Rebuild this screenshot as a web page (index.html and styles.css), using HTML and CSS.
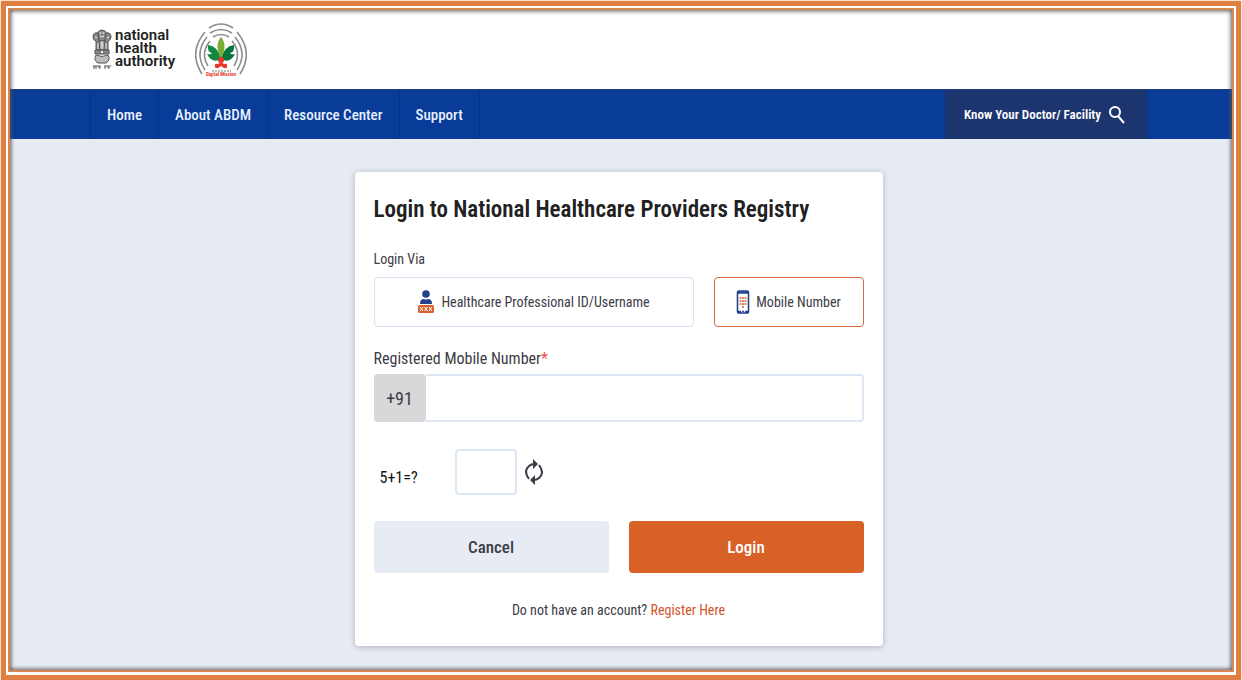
FILE: index.html
```
<!DOCTYPE html>
<html lang="en">
<head>
    <meta charset="UTF-8">
    <meta name="viewport" content="width=device-width, initial-scale=1.0">
    <title>Login to National Healthcare Providers Registry</title>
    <link rel="stylesheet" href="styles.css">
</head>
<body>
    <div class="frame">
        <div class="page">
            <header class="header">
                <a href="#" class="nha-logo">
                    <svg class="emblem" width="20" height="42" viewBox="0 0 20 42" aria-hidden="true">
                        <g fill="#888" stroke="#555" stroke-width="1">
                            <path d="M6 3 Q10 -1 14 3 L15 7 L13 12 H7 L5 7 Z"/>
                            <path d="M6 4 Q1 3 1 8 Q1 11 4 12 L4 21 H8 L7 11 Z"/>
                            <path d="M14 4 Q19 3 19 8 Q19 11 16 12 L16 21 H12 L13 11 Z"/>
                            <path d="M7 12 H13 L12 21 H8 Z" fill="#aaa"/>
                            <path d="M3 21 H17 V25 H3 Z"/>
                            <path d="M4 26 Q10 29 16 26 Q19 31 14 34 H6 Q1 31 4 26 Z" fill="#bbb"/>
                        </g>
                        <path d="M8 3 L9 5 M12 3 L11 5 M8 7 Q10 9 12 7 M3 8 L5 9 M17 8 L15 9 M6 14 V20 M14 14 V20 M10 12 V20" stroke="#eee" fill="none"/>
                        <circle cx="10" cy="23" r="2" fill="#eee" stroke="#555"/>
                        <path d="M1 37 H9 M12 37 H19 M2 37 V40 M4 37 V40 M6 38 H8 V40 M13 37 V40 M15 38 H17 V40" stroke="#555" fill="none"/>
                    </svg>
                    <span class="nha-name">national<br>health<br>authority</span>
                </a>
                <a href="#" class="mission-logo" aria-label="Digital Mission">
                    <svg width="52" height="54" viewBox="0 0 52 54">
                        <g fill="none" stroke="#8d8d8d" stroke-width="1.6">
                            <path d="M14 5 Q26 -3 38 5"/>
                            <path d="M15 10 Q26 3 37 10"/>
                            <path d="M18 14 Q26 9 34 14"/>
                            <path d="M10 9 Q-7 29 7 51"/>
                            <path d="M12 14 Q-1 30 10 47"/>
                            <path d="M15 18 Q5 30 13 43"/>
                            <path d="M42 9 Q59 29 45 51"/>
                            <path d="M40 14 Q53 30 42 47"/>
                            <path d="M37 18 Q47 30 39 43"/>
                        </g>
                        <path d="M26 36 Q17 41 12 31 Q16 32 17 30 Q12 29 13 22 Q23 23 26 36 Z" fill="#138845"/>
                        <path d="M26 36 Q35 41 40 31 Q36 32 35 30 Q40 29 39 22 Q29 23 26 36 Z" fill="#08743b"/>
                        <path d="M26 14 Q19 22 26 36 Q33 22 26 14 Z" fill="#7cac32"/>
                        <circle cx="26" cy="37" r="3" fill="#e6392c"/>
                        <path d="M26 39 L29 41 Q33 40 32 44 Q31 47 26 43 Q21 47 20 44 Q19 40 23 41 Z" fill="#e6392c"/>
                        <path d="M17 48 H36" stroke="#777" stroke-dasharray="2 1"/>
                        <text class="mission-text" x="26" y="53" text-anchor="middle">Digital Mission</text>
                    </svg>
                </a>
            </header>

            <nav class="navbar">
                <div class="menu">
                    <a href="#">Home</a>
                    <a href="#">About ABDM</a>
                    <a href="#">Resource Center</a>
                    <a href="#">Support</a>
                </div>
                <a href="#" class="know-doctor">
                    Know Your Doctor/ Facility
                    <svg width="16" height="18" viewBox="0 0 16 18" fill="none" stroke="#fff" stroke-width="2" aria-hidden="true">
                        <circle cx="6" cy="6" r="5"/>
                        <path d="M9 10 L15 17"/>
                    </svg>
                </a>
            </nav>

            <main class="content">
                <form class="card">
                    <h1>Login to National Healthcare Providers Registry</h1>

                    <div class="via-label" id="via">Login Via</div>
                    <div class="options" role="group" aria-labelledby="via">
                        <button type="button" class="option option-id" aria-pressed="false">
                            <svg width="18" height="24" viewBox="0 0 18 24" aria-hidden="true">
                                <circle cx="9" cy="4" r="3.8" fill="#24418c"/>
                                <path d="M3 14 Q3 9 7 9 Q9 10 11 9 Q15 9 15 14 Z" fill="#24418c"/>
                                <rect x="1" y="15" width="16" height="8" rx="1.5" fill="#d8622b"/>
                                <path d="M3 17 L6 21 M6 17 L3 21 M7.5 17 L10.5 21 M10.5 17 L7.5 21 M12 17 L15 21 M15 17 L12 21" stroke="#fff"/>
                            </svg>
                            Healthcare Professional ID/Username
                        </button>
                        <button type="button" class="option active" aria-pressed="true">
                            <svg width="14" height="24" viewBox="0 0 14 24" aria-hidden="true">
                                <rect x="1.5" y="1" width="11" height="22" rx="1.5" fill="#fff" stroke="#24418c" stroke-width="1.6"/>
                                <path d="M1 2.5 H13 M1 22 H5 M9 22 H13" stroke="#24418c" stroke-width="2.4"/>
                                <circle cx="7" cy="21.5" r="1" fill="#24418c"/>
                                <g fill="#e08a60">
                                    <path d="M3.5 7 h2 v2 h-2 Z M6 7 h2 v2 h-2 Z M8.5 7 h2 v2 h-2 Z"/>
                                    <path d="M3.5 10 h2 v2 h-2 Z M6 10 h2 v2 h-2 Z M8.5 10 h2 v2 h-2 Z"/>
                                    <path d="M3.5 13 h2 v2 h-2 Z M6 13 h2 v2 h-2 Z M8.5 13 h2 v2 h-2 Z"/>
                                    <path d="M6 16 h2 v2 h-2 Z"/>
                                </g>
                            </svg>
                            Mobile Number
                        </button>
                    </div>

                    <label class="field-label" for="mobile">Registered Mobile Number<span class="required">*</span></label>
                    <div class="phone">
                        <span class="prefix">+91</span>
                        <input type="tel" id="mobile">
                    </div>

                    <div class="captcha">
                        <label class="captcha-text" for="answer">5+1=?</label>
                        <input type="text" id="answer">
                        <button type="button" class="refresh" aria-label="Refresh captcha">
                            <svg width="18" height="26" viewBox="0 0 18 26" fill="none" stroke="#3c3c46" stroke-width="2">
                                <path d="M4 20 Q-2 12 4 7 Q6 5 10 5"/>
                                <path d="M14 6 Q20 14 14 19 Q12 21 8 21"/>
                                <path d="M8 0 L13 5 L8 10 Z M10 16 L5 21 L10 26 Z" fill="#3c3c46" stroke="none"/>
                            </svg>
                        </button>
                    </div>

                    <div class="actions">
                        <button type="button" class="btn cancel">Cancel</button>
                        <button type="submit" class="btn login">Login</button>
                    </div>

                    <p class="register">Do not have an account? <a href="#">Register Here</a></p>
                </form>
            </main>
        </div>
    </div>
</body>
</html>
```
FILE: styles.css
```
* {
    box-sizing: border-box;
}
body {
    margin: 0;
    font-family: "Roboto Condensed", Roboto, sans-serif;
    color: #3c3c46;
    background: #fff;
}
a {
    text-decoration: none;
}
button, input {
    font-family: inherit;
    color: inherit;
}
button {
    cursor: pointer;
}
.frame {
    display: flex;
    min-height: 100vh;
    padding: 7px 7px 8px;
    border: 1px solid #fbe3cf;
    outline: 5px solid #e08040;
    outline-offset: -6px;
}
.page {
    position: relative;
    flex: 1;
    display: flex;
    flex-direction: column;
    border: 2px solid #d9854f;
    background: #e7ebf4;
}
/* inner shadow sits over the header and nav */
.page::after {
    content: "";
    position: absolute;
    inset: 0;
    box-shadow: inset 0 0 4px 1px #555;
    pointer-events: none;
}
.header {
    display: flex;
    align-items: center;
    gap: 20px;
    height: 79px;
    padding: 0 85px 0 82px;
    background: #fff;
}
.nha-logo {
    display: flex;
    gap: 3px;
    color: #222;
}
.nha-name {
    font-family: Roboto, sans-serif;
    font-size: 15px;
    font-weight: 600;
    line-height: 13px;
}
.mission-logo {
    display: flex;
}
.mission-text {
    font-size: 5px;
    font-weight: bold;
    fill: #e6392c;
}
.navbar {
    display: flex;
    justify-content: space-between;
    height: 50px;
    padding: 0 85px 0 80px;
    background: #083c98;
    border-top: 1px solid #1d3e7c;
}
.menu {
    display: flex;
    border-left: 1px solid #07347f;
}
.menu a {
    display: flex;
    align-items: center;
    padding: 0 16px;
    border-right: 1px solid #07347f;
    color: #e8f0ff;
    font-size: 15px;
    font-weight: 500;
}
.know-doctor {
    display: flex;
    align-items: center;
    gap: 8px;
    padding: 0 22px 0 19px;
    background: #1c356f;
    color: #fff;
    font-size: 13px;
    font-weight: 600;
}
.content {
    flex: 1;
    display: flex;
    justify-content: center;
    align-items: flex-start;
    padding: 33px 85px 24px 80px;
}
.card {
    width: 528px;
    padding: 20px 19px;
    background: #fff;
    border-radius: 4px;
    box-shadow: 0 1px 6px rgba(0, 0, 0, 0.25);
}
h1 {
    margin: 0 0 23px;
    color: #212121;
    font-size: 23px;
    font-weight: 600;
    line-height: 36px;
}
.via-label {
    font-size: 14px;
    line-height: 16px;
    margin-bottom: 10px;
}
.options {
    display: flex;
    gap: 20px;
    margin-bottom: 22px;
}
.option {
    display: flex;
    align-items: center;
    justify-content: center;
    gap: 6px;
    width: 150px;
    height: 50px;
    padding: 0;
    background: #fff;
    border: 1px solid #d9e2f0;
    border-radius: 4px;
    font-size: 14px;
}
.option-id {
    flex: 1;
}
.option.active {
    border-color: #d2693f;
}
.field-label {
    display: block;
    margin-bottom: 5px;
    font-size: 16px;
    line-height: 20px;
}
.required {
    color: #f05050;
}
.phone {
    display: flex;
    height: 48px;
    margin-bottom: 27px;
}
.prefix {
    display: flex;
    align-items: center;
    justify-content: center;
    width: 52px;
    background: #d8d8da;
    border-radius: 4px;
    font-size: 18px;
}
.phone input, .captcha input {
    border: 2px solid #dde6f3;
    background: #fff;
    font-size: 16px;
    padding: 0 10px;
}
.phone input {
    flex: 1;
    min-width: 0;
    border-left: 0;
    border-radius: 0 4px 4px 0;
}
.captcha {
    display: flex;
    align-items: center;
    margin-bottom: 26px;
}
.captcha-text {
    width: 81px;
    padding: 10px 0 0 6px;
    color: #111;
    font-size: 16px;
}
.captcha input {
    width: 62px;
    height: 46px;
    border-radius: 4px;
}
.refresh {
    display: flex;
    padding: 0;
    margin-left: 8px;
    border: 0;
    background: none;
}
.actions {
    display: flex;
    gap: 20px;
    margin-bottom: 27px;
}
.btn {
    flex: 1;
    height: 52px;
    border: 0;
    border-radius: 4px;
    font-size: 17px;
    font-weight: 500;
}
.cancel {
    background: #e7ebf4;
}
.login {
    background: #d76126;
    color: #fff;
}
.register {
    margin: 0;
    padding-bottom: 6px;
    text-align: center;
    font-size: 14px;
    line-height: 20px;
}
.register a {
    color: #d2542a;
}
```
